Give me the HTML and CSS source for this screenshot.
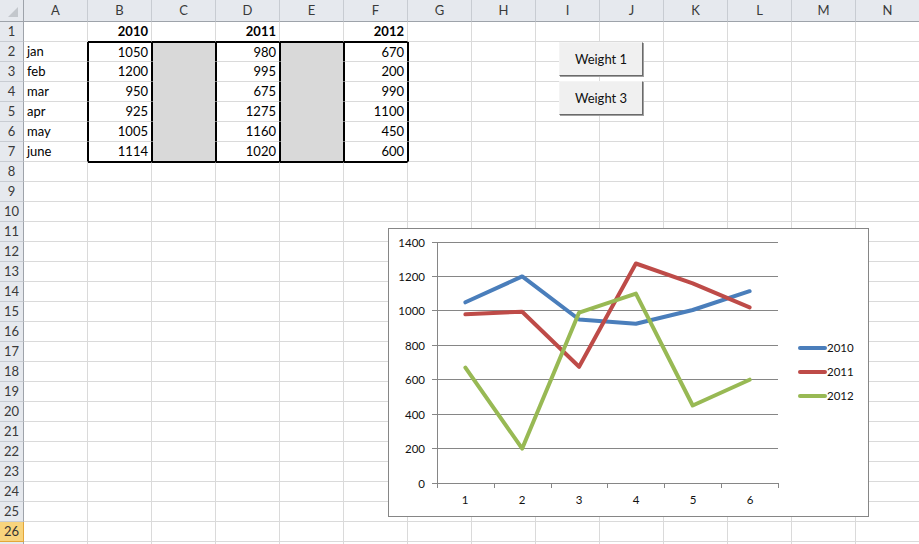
FILE: index.html
```html
<!DOCTYPE html>
<html>
<head>
<meta charset="utf-8">
<title>Sheet1</title>
<link rel="stylesheet" href="styles.css">
</head>
<body>
<div class="sheet">
  <div class="grid">
    <div class="row hdr"><div class="corner"><span class="tri"></span></div><div>A</div><div>B</div><div>C</div><div>D</div><div>E</div><div>F</div><div>G</div><div>H</div><div>I</div><div>J</div><div>K</div><div>L</div><div>M</div><div>N</div></div>
    <div class="row"><div class="rh">1</div><div></div><div class="num b kb">2010</div><div class="kb"></div><div class="num b kb">2011</div><div class="kb"></div><div class="num b kb">2012</div><div></div><div></div><div></div><div></div><div></div><div></div><div></div><div></div></div>
    <div class="row"><div class="rh">2</div><div class="kr">jan</div><div class="num kl kr kt">1050</div><div class="g kl kr kt"></div><div class="num kl kr kt">980</div><div class="g kl kr kt"></div><div class="num kl kr kt">670</div><div class="kl"></div><div></div><div></div><div></div><div></div><div></div><div></div><div></div></div>
    <div class="row"><div class="rh">3</div><div class="kr">feb</div><div class="num kl kr">1200</div><div class="g kl kr"></div><div class="num kl kr">995</div><div class="g kl kr"></div><div class="num kl kr">200</div><div class="kl"></div><div></div><div></div><div></div><div></div><div></div><div></div><div></div></div>
    <div class="row"><div class="rh">4</div><div class="kr">mar</div><div class="num kl kr">950</div><div class="g kl kr"></div><div class="num kl kr">675</div><div class="g kl kr"></div><div class="num kl kr">990</div><div class="kl"></div><div></div><div></div><div></div><div></div><div></div><div></div><div></div></div>
    <div class="row"><div class="rh">5</div><div class="kr">apr</div><div class="num kl kr">925</div><div class="g kl kr"></div><div class="num kl kr">1275</div><div class="g kl kr"></div><div class="num kl kr">1100</div><div class="kl"></div><div></div><div></div><div></div><div></div><div></div><div></div><div></div></div>
    <div class="row"><div class="rh">6</div><div class="kr">may</div><div class="num kl kr">1005</div><div class="g kl kr"></div><div class="num kl kr">1160</div><div class="g kl kr"></div><div class="num kl kr">450</div><div class="kl"></div><div></div><div></div><div></div><div></div><div></div><div></div><div></div></div>
    <div class="row"><div class="rh">7</div><div class="kr">june</div><div class="num kl kr kb">1114</div><div class="g kl kr kb"></div><div class="num kl kr kb">1020</div><div class="g kl kr kb"></div><div class="num kl kr kb">600</div><div class="kl"></div><div></div><div></div><div></div><div></div><div></div><div></div><div></div></div>
    <div class="row"><div class="rh">8</div><div></div><div class="kt"></div><div class="kt"></div><div class="kt"></div><div class="kt"></div><div class="kt"></div><div></div><div></div><div></div><div></div><div></div><div></div><div></div><div></div></div>
    <div class="row"><div class="rh">9</div><div></div><div></div><div></div><div></div><div></div><div></div><div></div><div></div><div></div><div></div><div></div><div></div><div></div><div></div></div>
    <div class="row"><div class="rh">10</div><div></div><div></div><div></div><div></div><div></div><div></div><div></div><div></div><div></div><div></div><div></div><div></div><div></div><div></div></div>
    <div class="row"><div class="rh">11</div><div></div><div></div><div></div><div></div><div></div><div></div><div></div><div></div><div></div><div></div><div></div><div></div><div></div><div></div></div>
    <div class="row"><div class="rh">12</div><div></div><div></div><div></div><div></div><div></div><div></div><div></div><div></div><div></div><div></div><div></div><div></div><div></div><div></div></div>
    <div class="row"><div class="rh">13</div><div></div><div></div><div></div><div></div><div></div><div></div><div></div><div></div><div></div><div></div><div></div><div></div><div></div><div></div></div>
    <div class="row"><div class="rh">14</div><div></div><div></div><div></div><div></div><div></div><div></div><div></div><div></div><div></div><div></div><div></div><div></div><div></div><div></div></div>
    <div class="row"><div class="rh">15</div><div></div><div></div><div></div><div></div><div></div><div></div><div></div><div></div><div></div><div></div><div></div><div></div><div></div><div></div></div>
    <div class="row"><div class="rh">16</div><div></div><div></div><div></div><div></div><div></div><div></div><div></div><div></div><div></div><div></div><div></div><div></div><div></div><div></div></div>
    <div class="row"><div class="rh">17</div><div></div><div></div><div></div><div></div><div></div><div></div><div></div><div></div><div></div><div></div><div></div><div></div><div></div><div></div></div>
    <div class="row"><div class="rh">18</div><div></div><div></div><div></div><div></div><div></div><div></div><div></div><div></div><div></div><div></div><div></div><div></div><div></div><div></div></div>
    <div class="row"><div class="rh">19</div><div></div><div></div><div></div><div></div><div></div><div></div><div></div><div></div><div></div><div></div><div></div><div></div><div></div><div></div></div>
    <div class="row"><div class="rh">20</div><div></div><div></div><div></div><div></div><div></div><div></div><div></div><div></div><div></div><div></div><div></div><div></div><div></div><div></div></div>
    <div class="row"><div class="rh">21</div><div></div><div></div><div></div><div></div><div></div><div></div><div></div><div></div><div></div><div></div><div></div><div></div><div></div><div></div></div>
    <div class="row"><div class="rh">22</div><div></div><div></div><div></div><div></div><div></div><div></div><div></div><div></div><div></div><div></div><div></div><div></div><div></div><div></div></div>
    <div class="row"><div class="rh">23</div><div></div><div></div><div></div><div></div><div></div><div></div><div></div><div></div><div></div><div></div><div></div><div></div><div></div><div></div></div>
    <div class="row"><div class="rh">24</div><div></div><div></div><div></div><div></div><div></div><div></div><div></div><div></div><div></div><div></div><div></div><div></div><div></div><div></div></div>
    <div class="row"><div class="rh">25</div><div></div><div></div><div></div><div></div><div></div><div></div><div></div><div></div><div></div><div></div><div></div><div></div><div></div><div></div></div>
    <div class="row"><div class="rh sel">26</div><div></div><div></div><div></div><div></div><div></div><div></div><div></div><div></div><div></div><div></div><div></div><div></div><div></div><div></div></div>
    <div class="row"><div class="rh"></div><div></div><div></div><div></div><div></div><div></div><div></div><div></div><div></div><div></div><div></div><div></div><div></div><div></div><div></div></div>
  </div>

  <div class="btn btn1">Weight 1</div>
  <div class="btn btn2">Weight 3</div>

  <div class="chart">
    <svg class="chart-svg" width="479" height="287" viewBox="0 0 479 287">
      <g transform="translate(-389 -229)">
        <g class="gridlines">
          <line x1="432" y1="242.5" x2="778" y2="242.5"/>
          <line x1="432" y1="276.5" x2="778" y2="276.5"/>
          <line x1="432" y1="310.5" x2="778" y2="310.5"/>
          <line x1="432" y1="345.5" x2="778" y2="345.5"/>
          <line x1="432" y1="379.5" x2="778" y2="379.5"/>
          <line x1="432" y1="414.5" x2="778" y2="414.5"/>
          <line x1="432" y1="448.5" x2="778" y2="448.5"/>
          <line x1="432" y1="483.5" x2="778" y2="483.5"/>
          <line x1="437.5" y1="242" x2="437.5" y2="488"/>
          <line x1="494.5" y1="483" x2="494.5" y2="488"/>
          <line x1="551.5" y1="483" x2="551.5" y2="488"/>
          <line x1="607.5" y1="483" x2="607.5" y2="488"/>
          <line x1="664.5" y1="483" x2="664.5" y2="488"/>
          <line x1="721.5" y1="483" x2="721.5" y2="488"/>
          <line x1="778.5" y1="483" x2="778.5" y2="488"/>
        </g>
        <g class="ylabels">
          <text x="425" y="247">1400</text>
          <text x="425" y="281">1200</text>
          <text x="425" y="315">1000</text>
          <text x="425" y="350">800</text>
          <text x="425" y="384">600</text>
          <text x="425" y="419">400</text>
          <text x="425" y="453">200</text>
          <text x="425" y="488">0</text>
        </g>
        <g class="xlabels">
          <text x="465" y="504">1</text>
          <text x="522" y="504">2</text>
          <text x="579" y="504">3</text>
          <text x="636" y="504">4</text>
          <text x="693" y="504">5</text>
          <text x="750" y="504">6</text>
        </g>
        <polyline class="s2010" points="465.4,302.3 522.2,276.4 579.1,319.5 635.9,323.8 692.7,310 749.6,291.2"/>
        <polyline class="s2011" points="465.4,314.3 522.2,311.7 579.1,366.8 635.9,263.5 692.7,283.3 749.6,307.4"/>
        <polyline class="s2012" points="465.4,367.7 522.2,448.6 579.1,312.6 635.9,293.6 692.7,405.5 749.6,379.7"/>
        <g class="legend">
          <line class="s2010" x1="800" y1="348" x2="825" y2="348"/>
          <line class="s2011" x1="800" y1="372" x2="825" y2="372"/>
          <line class="s2012" x1="800" y1="396" x2="825" y2="396"/>
          <text x="827" y="352">2010</text>
          <text x="827" y="376">2011</text>
          <text x="827" y="400">2012</text>
        </g>
      </g>
    </svg>
  </div>
</div>
</body>
</html>
```

FILE: styles.css
```css
html, body {
  margin: 0;
  padding: 0;
  background: #ffffff;
}

.sheet {
  position: relative;
  width: 919px;
  height: 544px;
  overflow: hidden;
  font-family: "Lato", "Carlito", sans-serif;
  font-size: 13px;
  color: #000;
}

.grid {
  display: flex;
  flex-direction: column;
  width: 920px;
}

.row {
  display: flex;
  height: 20px;
  flex: 0 0 20px;
}

.row > div {
  flex: 0 0 64px;
  box-sizing: border-box;
  border-right: 1px solid #dadada;
  border-bottom: 1px solid #dadada;
  padding: 0 3px;
  line-height: 19px;
  white-space: nowrap;
  overflow: hidden;
}

.row > .rh {
  flex-basis: 24px;
  padding: 0;
  text-align: center;
  background: #e6e9ee;
  color: #3a3a3a;
  border-right: 1px solid #9ea3aa;
  border-bottom: 1px solid #c8ccd2;
}

.row > .rh.sel {
  background: #f8d47d;
  border-right-color: #e3a63a;
  border-bottom-color: #e3a63a;
  color: #333;
}

.hdr {
  height: 22px;
  flex-basis: 22px;
}

.hdr > div {
  background: #e6e9ee;
  color: #3a3a3a;
  text-align: center;
  line-height: 21px;
  border-right: 1px solid #c8ccd2;
  border-bottom: 1px solid #9ea3aa;
}

.hdr > .corner {
  flex-basis: 24px;
  padding: 0;
  border-right: 1px solid #9ea3aa;
}

.tri {
  display: block;
  width: 10px;
  height: 10px;
  margin: 7px 0 0 8px;
  background: #c3c7cc;
  clip-path: polygon(100% 0, 100% 100%, 0 100%);
}

.num {
  text-align: right;
}

.b {
  font-weight: bold;
}

.row > .g {
  background: #d9d9d9;
  border-bottom-color: #d9d9d9;
}

.row > .kl { border-left: 1px solid #000; }
.row > .kr { border-right: 1px solid #000; }
.row > .kt { border-top: 1px solid #000; }
.row > .kb { border-bottom: 1px solid #000; }

.btn {
  position: absolute;
  left: 559px;
  width: 84px;
  height: 34px;
  box-sizing: border-box;
  display: flex;
  align-items: center;
  justify-content: center;
  background: #f0f0f0;
  border-top: 1px solid #f4f4f4;
  border-left: 1px solid #f4f4f4;
  border-right: 1px solid #6a6a6a;
  border-bottom: 1px solid #6a6a6a;
  box-shadow: 1px 1px 0 #a0a0a0;
  font-size: 13px;
  color: #111;
}

.btn1 { top: 42px; }
.btn2 { top: 81px; }

.chart {
  position: absolute;
  left: 388px;
  top: 228px;
  width: 481px;
  height: 289px;
  box-sizing: border-box;
  border: 1px solid #868686;
  background: #ffffff;
}

.chart-svg {
  display: block;
}

.gridlines line {
  stroke: #868686;
  stroke-width: 1;
}

.ylabels text {
  text-anchor: end;
  font-size: 11.5px;
  fill: #111;
}

.xlabels text {
  text-anchor: middle;
  font-size: 11.5px;
  fill: #111;
}

.legend text {
  font-size: 11.5px;
  fill: #111;
}

polyline, .legend line {
  fill: none;
  stroke-width: 4;
  stroke-linejoin: round;
  stroke-linecap: round;
}

.s2010 { stroke: #4a7ebb; }
.s2011 { stroke: #be4b48; }
.s2012 { stroke: #98b954; }
```
